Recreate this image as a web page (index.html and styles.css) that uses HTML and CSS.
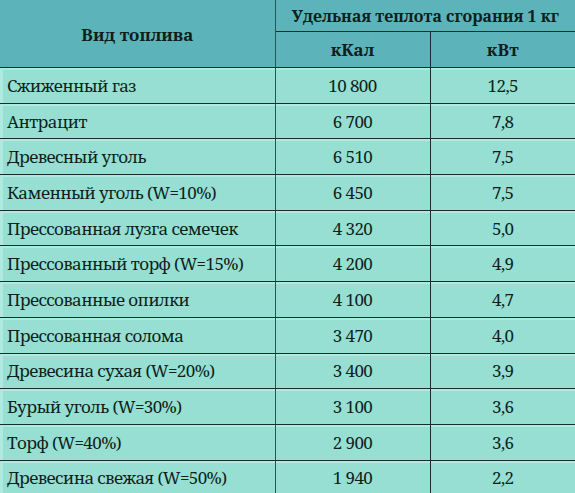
FILE: index.html
```html
<!DOCTYPE html>
<html lang="ru">
<head>
<meta charset="utf-8">
<link rel="stylesheet" href="styles.css">
</head>
<body>
<table class="fuel">
  <colgroup>
    <col class="c1"><col class="c2"><col class="c3">
  </colgroup>
  <thead>
    <tr class="h1">
      <th rowspan="2" class="name">Вид топлива</th>
      <th colspan="2" class="top">Удельная теплота сгорания 1 кг</th>
    </tr>
    <tr class="h2">
      <th>кКал</th>
      <th>кВт</th>
    </tr>
  </thead>
  <tbody>
    <tr><td>Сжиженный газ</td><td>10 800</td><td>12,5</td></tr>
    <tr><td>Антрацит</td><td>6 700</td><td>7,8</td></tr>
    <tr><td>Древесный уголь</td><td>6 510</td><td>7,5</td></tr>
    <tr><td>Каменный уголь (W=10%)</td><td>6 450</td><td>7,5</td></tr>
    <tr><td>Прессованная лузга семечек</td><td>4 320</td><td>5,0</td></tr>
    <tr><td>Прессованный торф (W=15%)</td><td>4 200</td><td>4,9</td></tr>
    <tr><td>Прессованные опилки</td><td>4 100</td><td>4,7</td></tr>
    <tr><td>Прессованная солома</td><td>3 470</td><td>4,0</td></tr>
    <tr><td>Древесина сухая (W=20%)</td><td>3 400</td><td>3,9</td></tr>
    <tr><td>Бурый уголь (W=30%)</td><td>3 100</td><td>3,6</td></tr>
    <tr><td>Торф (W=40%)</td><td>2 900</td><td>3,6</td></tr>
    <tr><td>Древесина свежая (W=50%)</td><td>1 940</td><td>2,2</td></tr>
  </tbody>
</table>
</body>
</html>
```
FILE: styles.css
```css
html, body {
  margin: 0;
  padding: 0;
  background: #96dfd2;
}
body {
  width: 575px;
  height: 493px;
  overflow: hidden;
}
.fuel {
  border-collapse: collapse;
  table-layout: fixed;
  width: 575px;
  font-family: "Noto Serif", "DejaVu Serif", serif;
  color: #0f1f1c;
}
.c1 { width: 275px; }
.c2 { width: 155px; }
.c3 { width: 145px; }

.fuel th {
  background: #5db3ba;
  font-weight: bold;
  font-size: 16px;
  letter-spacing: 0;
  padding: 0;
  text-align: center;
  border: 1px solid #14302c;
}
.fuel th.name {
  font-size: 17px;
  border-left: none;
  border-top: none;
  border-right-color: #1e5a55;
  padding-top: 2px;
}
.fuel th.top {
  border-top: none;
  border-right: none;
  height: 31px;
}
.h2 th {
  height: 35px;
  font-size: 17px;
}
.h2 th:last-child {
  border-right: none;
}
.fuel td {
  background: #96dfd2;
  font-size: 17px;
  letter-spacing: -0.6px;
  height: 34.7px;
  padding: 0;
  text-align: center;
  border: 1px solid #14302c;
  box-shadow: inset 0 2px 0 #aeeadf;
}
.fuel td:first-child {
  text-align: left;
  padding-left: 7px;
  border-left: none;
  border-right-color: #1e5a55;
  box-shadow: inset 3px 2px 0 #aeeadf;
}
.fuel td:last-child {
  border-right: none;
}
.fuel tbody tr:last-child td {
  border-bottom: none;
}
```
